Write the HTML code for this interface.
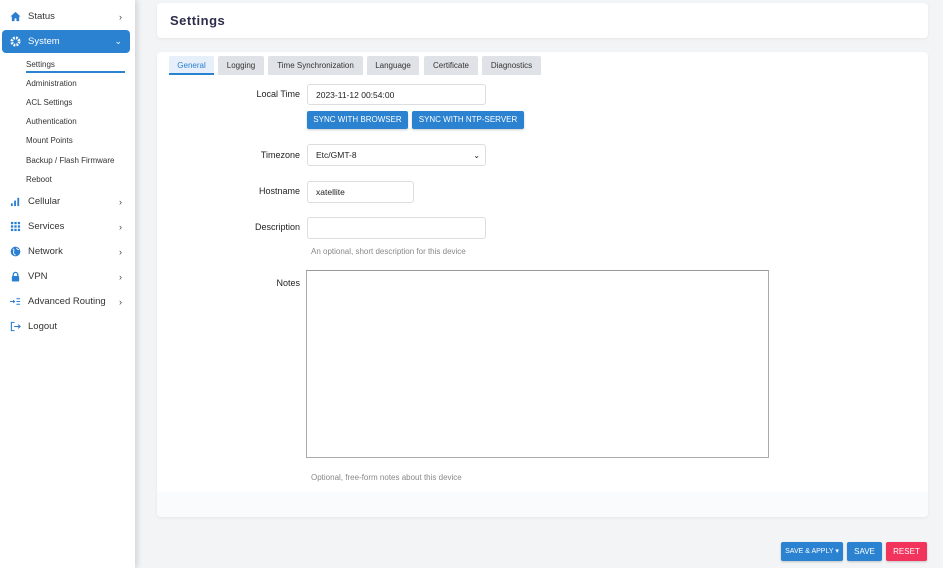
<!DOCTYPE html>
<html><head><meta charset="utf-8"><style>
*{box-sizing:border-box;margin:0;padding:0}
body{width:943px;height:568px;overflow:hidden;background:#f3f4f6;font-family:"Liberation Sans",sans-serif;position:relative;color:#222}
.a{position:absolute}
#side{left:0;top:0;width:135px;height:568px;background:#fff;box-shadow:2px 0 6px rgba(0,0,0,.15)}
.it{position:absolute;left:10px;font-size:9.5px;color:#333;display:flex;align-items:center;width:118px}
.it .ic{width:11px;height:11px;margin-right:7px;display:inline-block;color:#2a7fd0}
.it .ch{position:absolute;right:6px;font-size:9px;color:#444}
.sub{position:absolute;left:26px;font-size:8px;color:#333}
.card{background:#fff;border-radius:4px;box-shadow:0 1px 3px rgba(0,0,0,.06)}
.tab{position:absolute;top:56px;height:19px;background:#dfe3e8;font-size:8px;color:#333;text-align:center;line-height:19px;border-radius:2px 2px 0 0}
.lbl{position:absolute;font-size:9px;color:#222;text-align:right;width:100px;left:200px}
.inp{position:absolute;border:1px solid #ddd;border-radius:3px;background:#fff;font-size:8.5px;padding-left:8px;display:flex;align-items:center}
.btn{position:absolute;background:#2a82d0;color:#fff;font-size:8px;text-align:center;border-radius:2px;box-shadow:0 1px 2px rgba(0,0,0,.2)}
.hint{position:absolute;left:311px;font-size:8px;color:#888}
</style></head><body>
<div id="side" class="a">
<div class="it" style="top:11px"><svg class="ic" viewBox="0 0 12 12"><path d="M6 1L0.5 6H2v5h3V8h2v3h3V6h1.5z" fill="#2a7fd0"/></svg>Status<span class="ch">›</span></div>
<div class="a" style="left:2px;top:30px;width:128px;height:23px;background:#2a82d0;border-radius:4px"></div>
<div class="it" style="top:36px;color:#fff"><svg class="ic" viewBox="0 0 12 12"><circle cx="6" cy="6" r="4" fill="none" stroke="#fff" stroke-width="3" stroke-dasharray="2 1.2"/><circle cx="6" cy="6" r="1.3" fill="#2a82d0"/></svg>System<span class="ch" style="color:#fff">⌄</span></div>
<div class="sub" style="top:60px">Settings</div>
<div class="a" style="left:26px;top:71px;width:99px;height:2px;background:#2a82d0"></div>
<div class="sub" style="top:79px">Administration</div>
<div class="sub" style="top:98px">ACL Settings</div>
<div class="sub" style="top:117px">Authentication</div>
<div class="sub" style="top:136px">Mount Points</div>
<div class="sub" style="top:156px">Backup / Flash Firmware</div>
<div class="sub" style="top:175px">Reboot</div>
<div class="it" style="top:196px"><svg class="ic" viewBox="0 0 12 12"><rect x="1" y="8" width="2" height="3" fill="#2a7fd0"/><rect x="4.5" y="5" width="2" height="6" fill="#2a7fd0"/><rect x="8" y="2" width="2" height="9" fill="#2a7fd0"/></svg>Cellular<span class="ch">›</span></div>
<div class="it" style="top:221px"><svg class="ic" viewBox="0 0 12 12" fill="#2a7fd0"><rect x="1" y="1" width="2.5" height="2.5"/><rect x="4.75" y="1" width="2.5" height="2.5"/><rect x="8.5" y="1" width="2.5" height="2.5"/><rect x="1" y="4.75" width="2.5" height="2.5"/><rect x="4.75" y="4.75" width="2.5" height="2.5"/><rect x="8.5" y="4.75" width="2.5" height="2.5"/><rect x="1" y="8.5" width="2.5" height="2.5"/><rect x="4.75" y="8.5" width="2.5" height="2.5"/><rect x="8.5" y="8.5" width="2.5" height="2.5"/></svg>Services<span class="ch">›</span></div>
<div class="it" style="top:246px"><svg class="ic" viewBox="0 0 12 12"><circle cx="6" cy="6" r="5.3" fill="#2a7fd0"/><path d="M3 3q2 1 1 3t2 4M7 2q1 2 3 2" stroke="#fff" stroke-width="1" fill="none"/></svg>Network<span class="ch">›</span></div>
<div class="it" style="top:271px"><svg class="ic" viewBox="0 0 12 12"><path d="M3.5 5.5V4a2.5 2.5 0 015 0v1.5" stroke="#2a7fd0" stroke-width="1.4" fill="none"/><rect x="2" y="5.5" width="8" height="6" rx="1" fill="#2a7fd0"/></svg>VPN<span class="ch">›</span></div>
<div class="it" style="top:296px"><svg class="ic" viewBox="0 0 12 12"><path d="M0 6h5M3.5 4.5L5 6 3.5 7.5M7 3h4M7 6h4M7 9h4" stroke="#2a7fd0" stroke-width="1" fill="none"/></svg>Advanced Routing<span class="ch">›</span></div>
<div class="it" style="top:321px"><svg class="ic" viewBox="0 0 12 12"><path d="M5 1.5H1.5v9H5M4.5 6h6.5M9 4l2 2-2 2" stroke="#2a7fd0" stroke-width="1.2" fill="none"/></svg>Logout</div>
</div>

<div class="a card" style="left:157px;top:3px;width:771px;height:35px"></div>
<div class="a" style="left:170px;top:13px;font-size:13px;font-weight:bold;color:#2d2d4a;letter-spacing:.5px">Settings</div>

<div class="a card" style="left:157px;top:52px;width:771px;height:465px"></div>
<div class="a" style="left:157px;top:492px;width:771px;height:25px;background:#fafbfc;border-radius:0 0 4px 4px"></div>
<div class="tab" style="left:169px;width:45px;background:#e7effa;color:#2a7fd0;border-bottom:2px solid #2a82d0">General</div>
<div class="tab" style="left:218px;width:46px">Logging</div>
<div class="tab" style="left:268px;width:95px">Time Synchronization</div>
<div class="tab" style="left:367px;width:52px">Language</div>
<div class="tab" style="left:424px;width:54px">Certificate</div>
<div class="tab" style="left:482px;width:59px">Diagnostics</div>

<div class="lbl" style="top:89px">Local Time</div>
<div class="inp" style="left:307px;top:84px;width:179px;height:21px">2023-11-12 00:54:00</div>
<div class="btn" style="left:307px;top:111px;width:101px;height:18px;line-height:18px">SYNC WITH BROWSER</div>
<div class="btn" style="left:412px;top:111px;width:112px;height:18px;line-height:18px">SYNC WITH NTP-SERVER</div>
<div class="lbl" style="top:150px">Timezone</div>
<div class="inp" style="left:307px;top:144px;width:179px;height:22px">Etc/GMT-8<span style="position:absolute;right:5px;font-size:8px">⌄</span></div>
<div class="lbl" style="top:186px">Hostname</div>
<div class="inp" style="left:307px;top:181px;width:107px;height:22px">xatellite</div>
<div class="lbl" style="top:222px">Description</div>
<div class="inp" style="left:307px;top:217px;width:179px;height:22px"></div>
<div class="hint" style="top:247px">An optional, short description for this device</div>
<div class="lbl" style="top:278px">Notes</div>
<div class="a" style="left:306px;top:270px;width:463px;height:188px;border:1px solid #aaa;border-top-color:#999;background:#fff"></div>
<div class="hint" style="top:473px">Optional, free-form notes about this device</div>

<div class="btn" style="left:781px;top:542px;width:62px;height:19px;line-height:19px;font-size:7px">SAVE &amp; APPLY ▾</div>
<div class="btn" style="left:847px;top:542px;width:35px;height:19px;line-height:19px">SAVE</div>
<div class="btn" style="left:886px;top:542px;width:41px;height:19px;line-height:19px;background:#f2335c">RESET</div>
</body></html>
